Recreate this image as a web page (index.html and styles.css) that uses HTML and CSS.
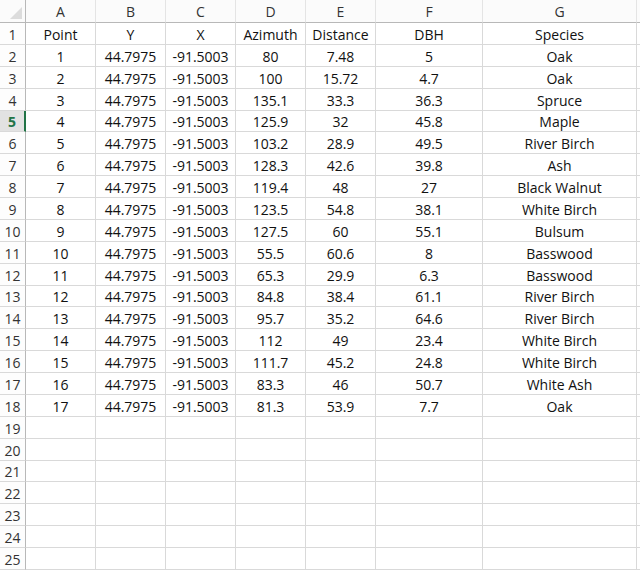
FILE: index.html
```html
<!DOCTYPE html>
<html>
<head>
<meta charset="utf-8">
<link rel="stylesheet" href="styles.css">
</head>
<body>
<div class="sheet">
  <div class="row colhead">
    <div class="corner"><span class="tri"></span></div>
    <div class="ch">A</div><div class="ch">B</div><div class="ch">C</div><div class="ch">D</div><div class="ch">E</div><div class="ch">F</div><div class="ch">G</div><div class="ch end"></div>
  </div>
  <div class="row"><div class="rh">1</div><div class="c">Point</div><div class="c">Y</div><div class="c">X</div><div class="c">Azimuth</div><div class="c">Distance</div><div class="c">DBH</div><div class="c">Species</div><div class="c end"></div></div>
  <div class="row"><div class="rh">2</div><div class="c">1</div><div class="c">44.7975</div><div class="c">-91.5003</div><div class="c">80</div><div class="c">7.48</div><div class="c">5</div><div class="c">Oak</div><div class="c end"></div></div>
  <div class="row"><div class="rh">3</div><div class="c">2</div><div class="c">44.7975</div><div class="c">-91.5003</div><div class="c">100</div><div class="c">15.72</div><div class="c">4.7</div><div class="c">Oak</div><div class="c end"></div></div>
  <div class="row"><div class="rh">4</div><div class="c">3</div><div class="c">44.7975</div><div class="c">-91.5003</div><div class="c">135.1</div><div class="c">33.3</div><div class="c">36.3</div><div class="c">Spruce</div><div class="c end"></div></div>
  <div class="row"><div class="rh sel">5</div><div class="c">4</div><div class="c">44.7975</div><div class="c">-91.5003</div><div class="c">125.9</div><div class="c">32</div><div class="c">45.8</div><div class="c">Maple</div><div class="c end"></div></div>
  <div class="row"><div class="rh">6</div><div class="c">5</div><div class="c">44.7975</div><div class="c">-91.5003</div><div class="c">103.2</div><div class="c">28.9</div><div class="c">49.5</div><div class="c">River Birch</div><div class="c end"></div></div>
  <div class="row"><div class="rh">7</div><div class="c">6</div><div class="c">44.7975</div><div class="c">-91.5003</div><div class="c">128.3</div><div class="c">42.6</div><div class="c">39.8</div><div class="c">Ash</div><div class="c end"></div></div>
  <div class="row"><div class="rh">8</div><div class="c">7</div><div class="c">44.7975</div><div class="c">-91.5003</div><div class="c">119.4</div><div class="c">48</div><div class="c">27</div><div class="c">Black Walnut</div><div class="c end"></div></div>
  <div class="row"><div class="rh">9</div><div class="c">8</div><div class="c">44.7975</div><div class="c">-91.5003</div><div class="c">123.5</div><div class="c">54.8</div><div class="c">38.1</div><div class="c">White Birch</div><div class="c end"></div></div>
  <div class="row"><div class="rh">10</div><div class="c">9</div><div class="c">44.7975</div><div class="c">-91.5003</div><div class="c">127.5</div><div class="c">60</div><div class="c">55.1</div><div class="c">Bulsum</div><div class="c end"></div></div>
  <div class="row"><div class="rh">11</div><div class="c">10</div><div class="c">44.7975</div><div class="c">-91.5003</div><div class="c">55.5</div><div class="c">60.6</div><div class="c">8</div><div class="c">Basswood</div><div class="c end"></div></div>
  <div class="row"><div class="rh">12</div><div class="c">11</div><div class="c">44.7975</div><div class="c">-91.5003</div><div class="c">65.3</div><div class="c">29.9</div><div class="c">6.3</div><div class="c">Basswood</div><div class="c end"></div></div>
  <div class="row"><div class="rh">13</div><div class="c">12</div><div class="c">44.7975</div><div class="c">-91.5003</div><div class="c">84.8</div><div class="c">38.4</div><div class="c">61.1</div><div class="c">River Birch</div><div class="c end"></div></div>
  <div class="row"><div class="rh">14</div><div class="c">13</div><div class="c">44.7975</div><div class="c">-91.5003</div><div class="c">95.7</div><div class="c">35.2</div><div class="c">64.6</div><div class="c">River Birch</div><div class="c end"></div></div>
  <div class="row"><div class="rh">15</div><div class="c">14</div><div class="c">44.7975</div><div class="c">-91.5003</div><div class="c">112</div><div class="c">49</div><div class="c">23.4</div><div class="c">White Birch</div><div class="c end"></div></div>
  <div class="row"><div class="rh">16</div><div class="c">15</div><div class="c">44.7975</div><div class="c">-91.5003</div><div class="c">111.7</div><div class="c">45.2</div><div class="c">24.8</div><div class="c">White Birch</div><div class="c end"></div></div>
  <div class="row"><div class="rh">17</div><div class="c">16</div><div class="c">44.7975</div><div class="c">-91.5003</div><div class="c">83.3</div><div class="c">46</div><div class="c">50.7</div><div class="c">White Ash</div><div class="c end"></div></div>
  <div class="row"><div class="rh">18</div><div class="c">17</div><div class="c">44.7975</div><div class="c">-91.5003</div><div class="c">81.3</div><div class="c">53.9</div><div class="c">7.7</div><div class="c">Oak</div><div class="c end"></div></div>
  <div class="row"><div class="rh">19</div><div class="c"></div><div class="c"></div><div class="c"></div><div class="c"></div><div class="c"></div><div class="c"></div><div class="c"></div><div class="c end"></div></div>
  <div class="row"><div class="rh">20</div><div class="c"></div><div class="c"></div><div class="c"></div><div class="c"></div><div class="c"></div><div class="c"></div><div class="c"></div><div class="c end"></div></div>
  <div class="row"><div class="rh">21</div><div class="c"></div><div class="c"></div><div class="c"></div><div class="c"></div><div class="c"></div><div class="c"></div><div class="c"></div><div class="c end"></div></div>
  <div class="row"><div class="rh">22</div><div class="c"></div><div class="c"></div><div class="c"></div><div class="c"></div><div class="c"></div><div class="c"></div><div class="c"></div><div class="c end"></div></div>
  <div class="row"><div class="rh">23</div><div class="c"></div><div class="c"></div><div class="c"></div><div class="c"></div><div class="c"></div><div class="c"></div><div class="c"></div><div class="c end"></div></div>
  <div class="row"><div class="rh">24</div><div class="c"></div><div class="c"></div><div class="c"></div><div class="c"></div><div class="c"></div><div class="c"></div><div class="c"></div><div class="c end"></div></div>
  <div class="row"><div class="rh">25</div><div class="c"></div><div class="c"></div><div class="c"></div><div class="c"></div><div class="c"></div><div class="c"></div><div class="c"></div><div class="c end"></div></div>
</div>
</body>
</html>
```
FILE: styles.css
```css
html, body {
  margin: 0;
  padding: 0;
  background: #ffffff;
}
body {
  font-family: "Open Sans", "Liberation Sans", sans-serif;
  font-size: 14px;
  color: #111111;
  overflow: hidden;
}
.sheet {
  display: flex;
  flex-direction: column;
  width: 640px;
}
.row {
  display: grid;
  grid-template-columns: 26px 70px 70px 70px 70px 70px 107px 154px 3px;
  height: 21.88px;
  box-sizing: border-box;
}
.row.colhead {
  height: 23px;
}
.row > div {
  box-sizing: border-box;
  display: flex;
  align-items: center;
  justify-content: center;
  white-space: nowrap;
  overflow: hidden;
}
.c {
  border-right: 1px solid #d9d9d9;
  border-bottom: 1px solid #d9d9d9;
  padding-top: 2px;
}
.c.end {
  border-right: none;
}
.rh {
  border-right: 1px solid #b8b8b8;
  border-bottom: 1px solid #d9d9d9;
  color: #333333;
  padding-top: 2px;
  background: #fdfdfd;
}
.rh.sel {
  background: #e2e2e2;
  color: #217346;
  font-weight: 700;
  border-right: 2px solid #217346;
}
.ch {
  border-right: 1px solid #e4e4e4;
  border-bottom: 1px solid #b8b8b8;
  color: #333333;
  background: #fbfbfb;
}
.ch.end {
  border-right: none;
}
.corner {
  position: relative;
  border-right: 1px solid #b8b8b8;
  border-bottom: 1px solid #b8b8b8;
  background: #fbfbfb;
}
.tri {
  position: absolute;
  right: 3px;
  bottom: 3px;
  width: 0;
  height: 0;
  border-left: 12px solid transparent;
  border-bottom: 12px solid #dcdcdc;
}
```
